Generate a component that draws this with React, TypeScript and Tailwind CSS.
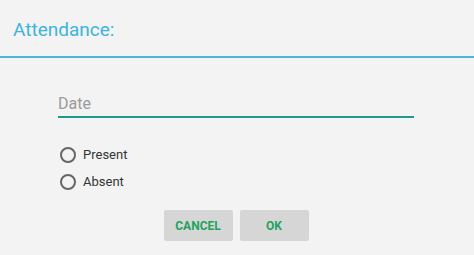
export default function App() {
  return (
    <div className="w-[474px] h-[255px] bg-[#f3f3f3] flex flex-col font-['Roboto',sans-serif] overflow-hidden">
      <div className="h-[56px] flex items-center pl-[13px] pt-[4px]">
        <p className="text-[19px] text-[#3db4dc]">Attendance:</p>
      </div>
      <div className="h-[2px] bg-[#4cb5d8]" />
      <div className="pl-[58px] pr-[60px] pt-[36px]">
        <div className="text-[16px] text-[#9a9a9a] leading-[20px] pb-[2px] border-b-2 border-[#1f9a8a]">Date</div>
      </div>
      <div className="pl-[60px] pt-[29px] flex flex-col gap-[11px]">
        {['Present', 'Absent'].map((l) => (
          <label key={l} className="flex items-center gap-[7px] h-[16px]">
            <span className="w-[16px] h-[16px] rounded-full border-2 border-[#666]" />
            <span className="text-[13px] text-[#333]">{l}</span>
          </label>
        ))}
      </div>
      <div className="flex justify-center gap-[7px] pt-[20px] pr-[2px]">
        <button className="w-[69px] h-[31px] bg-[#d6d6d6] rounded-[2px] text-[12px] font-bold text-[#21a35d]">CANCEL</button>
        <button className="w-[69px] h-[31px] bg-[#d6d6d6] rounded-[2px] text-[12px] font-bold text-[#21a35d]">OK</button>
      </div>
    </div>
  )
}
